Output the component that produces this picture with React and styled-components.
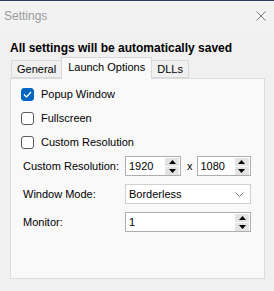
import styled, { createGlobalStyle } from 'styled-components';

const GlobalStyle = createGlobalStyle`
  html, body {
    margin: 0;
    padding: 0;
    background: #f0f0f0;
  }
  body {
    font-family: "Liberation Sans", Arial, sans-serif;
    font-size: 11px;
    color: #000;
  }
`;

const Window = styled.div`
  width: 274px;
  height: 291px;
  box-sizing: border-box;
  border-top: 1px solid #2c3b56;
  background: #f0f0f0;
  display: flex;
  flex-direction: column;
`;

const TitleBar = styled.div`
  height: 30px;
  display: flex;
  align-items: center;
  justify-content: space-between;
  padding: 0 8px 0 4px;
  background: #f2f2f2;
`;

const Title = styled.span`
  font-size: 12px;
  color: #9a9a9a;
`;

const Body = styled.div`
  padding: 8px 10px 0 10px;
  display: flex;
  flex-direction: column;
`;

const Heading = styled.div`
  font-weight: bold;
  font-size: 12px;
  height: 18px;
  line-height: 18px;
`;

const TabRow = styled.div`
  display: flex;
  align-items: flex-end;
  padding-left: 1px;
  height: 21px;
  position: relative;
  z-index: 1;
`;

const Tab = styled.div`
  box-sizing: border-box;
  height: ${p => (p.$active ? '22px' : '18px')};
  margin-bottom: ${p => (p.$active ? '-1px' : '0')};
  padding: ${p => (p.$active ? '0 6px 3px' : '0 5px 0')};
  display: flex;
  align-items: center;
  border: 1px solid #d9d9d9;
  border-bottom: ${p => (p.$active ? 'none' : '1px solid #d9d9d9')};
  border-left: ${p => (p.$first || p.$active ? '1px solid #d9d9d9' : 'none')};
  border-right: ${p => (p.$beforeActive ? 'none' : '1px solid #d9d9d9')};
  background: ${p => (p.$active ? '#f9f9f9' : '#f0f0f0')};
`;

const Panel = styled.div`
  box-sizing: border-box;
  width: 255px;
  height: 201px;
  border: 1px solid #dcdcdc;
  background: #f9f9f9;
  padding: 3px 0 0 10px;
  display: flex;
  flex-direction: column;
`;

const CheckRow = styled.label`
  display: flex;
  align-items: center;
  gap: 7px;
  height: 24px;
`;

const Box = styled.span`
  box-sizing: border-box;
  width: 13px;
  height: 13px;
  border-radius: 3px;
  border: 1px solid ${p => (p.$checked ? '#0067c0' : '#5a5a5a')};
  background: ${p => (p.$checked ? '#0067c0' : '#fff')};
  display: flex;
  align-items: center;
  justify-content: center;
`;

const FormRow = styled.div`
  display: flex;
  align-items: center;
  height: 20px;
  margin-top: ${p => p.$gap}px;
`;

const Label = styled.span`
  width: 102px;
  padding-left: 2px;
`;

const NumBox = styled.div`
  box-sizing: border-box;
  width: ${p => p.$w}px;
  height: 20px;
  border: 1px solid #adadad;
  background: #fff;
  display: flex;
  align-items: center;
  justify-content: space-between;
  padding: 0 1px 0 3px;
`;

const Spinner = styled.div`
  display: flex;
  flex-direction: column;
  gap: 1px;
  width: 14px;
`;

const SpinBtn = styled.div`
  height: 8px;
  background: #e3e3e3;
  display: flex;
  align-items: center;
  justify-content: center;
`;

const Times = styled.span`
  margin: 0 4px 0 6px;
`;

const Select = styled.div`
  box-sizing: border-box;
  width: 126px;
  height: 20px;
  border: 1px solid #d0d0d0;
  background: #fff;
  display: flex;
  align-items: center;
  justify-content: space-between;
  padding: 0 6px 0 3px;
`;

function Arrow({ up }) {
  return (
    <svg width="7" height="4" viewBox="0 0 7 4">
      <path d={up ? 'M3.5 0L7 4H0z' : 'M0 0H7L3.5 4z'} fill="#000" />
    </svg>
  );
}

function NumberInput({ value, width }) {
  return (
    <NumBox $w={width}>
      <span>{value}</span>
      <Spinner>
        <SpinBtn><Arrow up /></SpinBtn>
        <SpinBtn><Arrow /></SpinBtn>
      </Spinner>
    </NumBox>
  );
}

function Check({ checked, children }) {
  return (
    <CheckRow>
      <Box $checked={checked}>
        {checked && (
          <svg width="9" height="7" viewBox="0 0 9 7">
            <path d="M1 3.5L3.5 6L8 1" stroke="#fff" strokeWidth="1.3" fill="none" />
          </svg>
        )}
      </Box>
      {children}
    </CheckRow>
  );
}

export default function App() {
  return (
    <>
      <GlobalStyle />
      <Window>
        <TitleBar>
          <Title>Settings</Title>
          <svg width="10" height="10" viewBox="0 0 10 10">
            <path d="M0.5 0.5L9.5 9.5M9.5 0.5L0.5 9.5" stroke="#7a7a7a" strokeWidth="1" />
          </svg>
        </TitleBar>
        <Body>
          <Heading>All settings will be automatically saved</Heading>
          <TabRow>
            <Tab $first $beforeActive>General</Tab>
            <Tab $active>Launch Options</Tab>
            <Tab>DLLs</Tab>
          </TabRow>
          <Panel>
            <Check checked>Popup Window</Check>
            <Check>Fullscreen</Check>
            <Check>Custom Resolution</Check>
            <FormRow $gap={2}>
              <Label>Custom Resolution:</Label>
              <NumberInput value="1920" width={56} />
              <Times>x</Times>
              <NumberInput value="1080" width={54} />
            </FormRow>
            <FormRow $gap={8}>
              <Label>Window Mode:</Label>
              <Select>
                <span>Borderless</span>
                <svg width="9" height="5" viewBox="0 0 9 5">
                  <path d="M0.5 0.5L4.5 4.5L8.5 0.5" stroke="#777" fill="none" />
                </svg>
              </Select>
            </FormRow>
            <FormRow $gap={8}>
              <Label>Monitor:</Label>
              <NumberInput value="1" width={126} />
            </FormRow>
          </Panel>
        </Body>
      </Window>
    </>
  );
}
